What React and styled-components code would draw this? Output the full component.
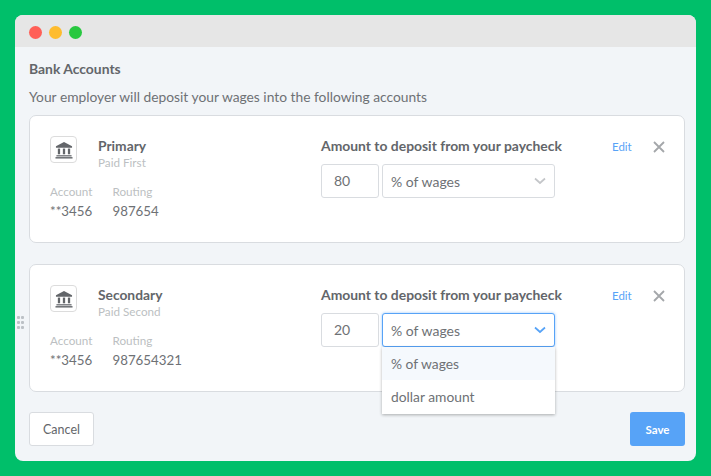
import React from "react";
import styled, { createGlobalStyle } from "styled-components";

const GlobalStyle = createGlobalStyle`
  html, body {
    margin: 0;
    padding: 0;
    background: #00bf6a;
  }
  body {
    font-family: "Lato", "Open Sans", sans-serif;
    color: #63666a;
  }
`;

const Page = styled.div`
  width: 711px;
  height: 476px;
  padding: 15px;
  box-sizing: border-box;
  background: #00bf6a;
  overflow: hidden;
`;

const Window = styled.div`
  position: relative;
  width: 681px;
  height: 446px;
  background: #f2f5f8;
  border-radius: 8px;
  overflow: hidden;
`;

const TitleBar = styled.div`
  height: 32px;
  box-sizing: border-box;
  background: #e6e6e6;
  display: flex;
  align-items: center;
  gap: 7px;
  padding: 2px 0 0 13.5px;
`;

const Light = styled.span`
  width: 13px;
  height: 13px;
  border-radius: 50%;
  background: ${({ $color }) => $color};
`;

const Content = styled.div`
  padding: 14px 11px 0 14px;
`;

const Title = styled.h1`
  margin: 0;
  font-size: 13.9px;
  line-height: 16px;
  font-weight: 700;
  color: #63666a;
`;

const Intro = styled.p`
  margin: 11px 0 0;
  font-size: 13.8px;
  line-height: 18px;
  color: #6e7175;
`;

const Cards = styled.div`
  margin-top: 9px;
  display: flex;
  flex-direction: column;
  gap: 21px;
`;

const Card = styled.div`
  position: relative;
  height: 128px;
  box-sizing: border-box;
  background: #fff;
  border: 1px solid #d9dce0;
  border-radius: 7px;
  padding: 20px 19px 0 20px;
  display: flex;
`;

const AccountInfo = styled.div`
  width: 271px;
`;

const AccountHead = styled.div`
  display: flex;
  gap: 21px;
`;

const BankBadge = styled.div`
  width: 27px;
  height: 27px;
  box-sizing: border-box;
  border: 1px solid #dcdcdc;
  border-radius: 4px;
  display: flex;
  align-items: center;
  justify-content: center;
`;

const AccountText = styled.div`
  padding-top: 1px;
`;

const AccountName = styled.div`
  font-size: 13.8px;
  line-height: 18px;
  font-weight: 700;
  color: #63666a;
`;

const AccountNote = styled.div`
  font-size: 11.7px;
  line-height: 15px;
  color: #bcbfc2;
`;

const Numbers = styled.div`
  margin-top: 13px;
  display: flex;
  gap: 20px;
`;

const NumberLabel = styled.div`
  font-size: 11.7px;
  line-height: 16px;
  color: #bcbfc2;
`;

const NumberValue = styled.div`
  margin-top: 3px;
  font-size: 13.3px;
  line-height: 18px;
  color: #6e7175;
`;

const Deposit = styled.div`
  width: 291px;
`;

const DepositLabel = styled.div`
  font-size: 13.9px;
  line-height: 20px;
  font-weight: 700;
  color: #63666a;
`;

const Fields = styled.div`
  margin-top: 8px;
  display: flex;
  gap: 3px;
  position: relative;
`;

const AmountBox = styled.div`
  width: 58px;
  height: 34px;
  box-sizing: border-box;
  background: #fff;
  border: 1px solid #d9dce0;
  border-radius: 3px;
  padding-left: 12px;
  font-size: 14px;
  line-height: 31px;
  color: #6e7175;
`;

const SelectBox = styled.div`
  width: 173px;
  height: 34px;
  box-sizing: border-box;
  background: #fff;
  border: 1px solid ${({ $open }) => ($open ? "#57a3f7" : "#d9dce0")};
  border-radius: 3px;
  box-shadow: ${({ $open }) => ($open ? "0 0 3px rgba(87,163,247,.6)" : "none")};
  padding: 0 8px 0 8px;
  display: flex;
  align-items: center;
  justify-content: space-between;
  font-size: 14px;
  color: #6e7175;
`;

const Menu = styled.div`
  position: absolute;
  top: 34px;
  left: 61px;
  width: 173px;
  padding-bottom: 1px;
  background: #fff;
  box-shadow: 0 1px 3px rgba(0, 0, 0, 0.3);
  z-index: 2;
`;

const MenuItem = styled.div`
  height: 33px;
  padding-left: 9px;
  font-size: 13.8px;
  line-height: 33px;
  color: #6e7175;
  background: ${({ $active }) => ($active ? "#f5f9fd" : "#fff")};
`;

const Actions = styled.div`
  display: flex;
  align-items: flex-start;
  justify-content: space-between;
  flex: 1;
  padding-top: 3px;
`;

const EditLink = styled.a`
  font-size: 11.5px;
  line-height: 16px;
  color: #57a3f7;
`;

const CloseSvg = styled.svg`
  margin-top: 2px;
`;

const Grip = styled.svg`
  position: absolute;
  left: 2px;
  top: 301px;
`;

const Footer = styled.div`
  margin-top: 20px;
  display: flex;
  justify-content: space-between;
`;

const CancelButton = styled.button`
  width: 65px;
  height: 34px;
  background: #fff;
  border: 1px solid #d9dce0;
  border-radius: 3px;
  font: 400 12.5px "Lato", sans-serif;
  color: #63666a;
`;

const SaveButton = styled.button`
  width: 55px;
  height: 34px;
  background: #57a3f7;
  border: none;
  border-radius: 3px;
  font: 700 11.5px "Lato", sans-serif;
  color: #fff;
`;

function BankIcon() {
  return (
    <svg width="18" height="18" viewBox="0 0 19 19" fill="#63666a">
      <path d="M9.5 1 L18 5.5 V7 H1 V5.5 Z" />
      <rect x="3" y="8" width="2.4" height="6" />
      <rect x="8.3" y="8" width="2.4" height="6" />
      <rect x="13.6" y="8" width="2.4" height="6" />
      <rect x="1.5" y="15" width="16" height="1.3" />
      <rect x="0.5" y="17" width="18" height="1.5" />
    </svg>
  );
}

function Chevron({ color }) {
  return (
    <svg width="12" height="8" viewBox="0 0 12 8" fill="none" stroke={color} strokeWidth="1.7">
      <path d="M1 1.5 L6 6 L11 1.5" />
    </svg>
  );
}

function CloseIcon() {
  return (
    <CloseSvg width="12" height="12" viewBox="0 0 12 12" stroke="#a4a7aa" strokeWidth="1.8">
      <path d="M1 1 L11 11 M11 1 L1 11" />
    </CloseSvg>
  );
}

function AccountCard({ name, note, routing, amount, open }) {
  return (
    <Card>
      <AccountInfo>
        <AccountHead>
          <BankBadge>
            <BankIcon />
          </BankBadge>
          <AccountText>
            <AccountName>{name}</AccountName>
            <AccountNote>{note}</AccountNote>
          </AccountText>
        </AccountHead>
        <Numbers>
          <div>
            <NumberLabel>Account</NumberLabel>
            <NumberValue>**3456</NumberValue>
          </div>
          <div>
            <NumberLabel>Routing</NumberLabel>
            <NumberValue>{routing}</NumberValue>
          </div>
        </Numbers>
      </AccountInfo>
      <Deposit>
        <DepositLabel>Amount to deposit from your paycheck</DepositLabel>
        <Fields>
          <AmountBox>{amount}</AmountBox>
          <SelectBox $open={open}>
            % of wages
            <Chevron color={open ? "#57a3f7" : "#c4c6c9"} />
          </SelectBox>
          {open && (
            <Menu>
              <MenuItem $active>% of wages</MenuItem>
              <MenuItem>dollar amount</MenuItem>
            </Menu>
          )}
        </Fields>
      </Deposit>
      <Actions>
        <EditLink>Edit</EditLink>
        <CloseIcon />
      </Actions>
    </Card>
  );
}

export default function App() {
  return (
    <Page>
      <GlobalStyle />
      <Window>
        <TitleBar>
          <Light $color="#ff5f57" />
          <Light $color="#febc2e" />
          <Light $color="#28c840" />
        </TitleBar>
        <Content>
          <Title>Bank Accounts</Title>
          <Intro>Your employer will deposit your wages into the following accounts</Intro>
          <Cards>
            <AccountCard name="Primary" note="Paid First" routing="987654" amount="80" />
            <AccountCard name="Secondary" note="Paid Second" routing="987654321" amount="20" open />
          </Cards>
          <Footer>
            <CancelButton>Cancel</CancelButton>
            <SaveButton>Save</SaveButton>
          </Footer>
        </Content>
        <Grip width="8" height="14" viewBox="0 0 8 14" fill="#bcc1c6">
          <rect x="0" y="0" width="3" height="3" rx="1" />
          <rect x="4" y="0" width="3" height="3" rx="1" />
          <rect x="0" y="5" width="3" height="3" rx="1" />
          <rect x="4" y="5" width="3" height="3" rx="1" />
          <rect x="0" y="10" width="3" height="3" rx="1" />
          <rect x="4" y="10" width="3" height="3" rx="1" />
        </Grip>
      </Window>
    </Page>
  );
}
